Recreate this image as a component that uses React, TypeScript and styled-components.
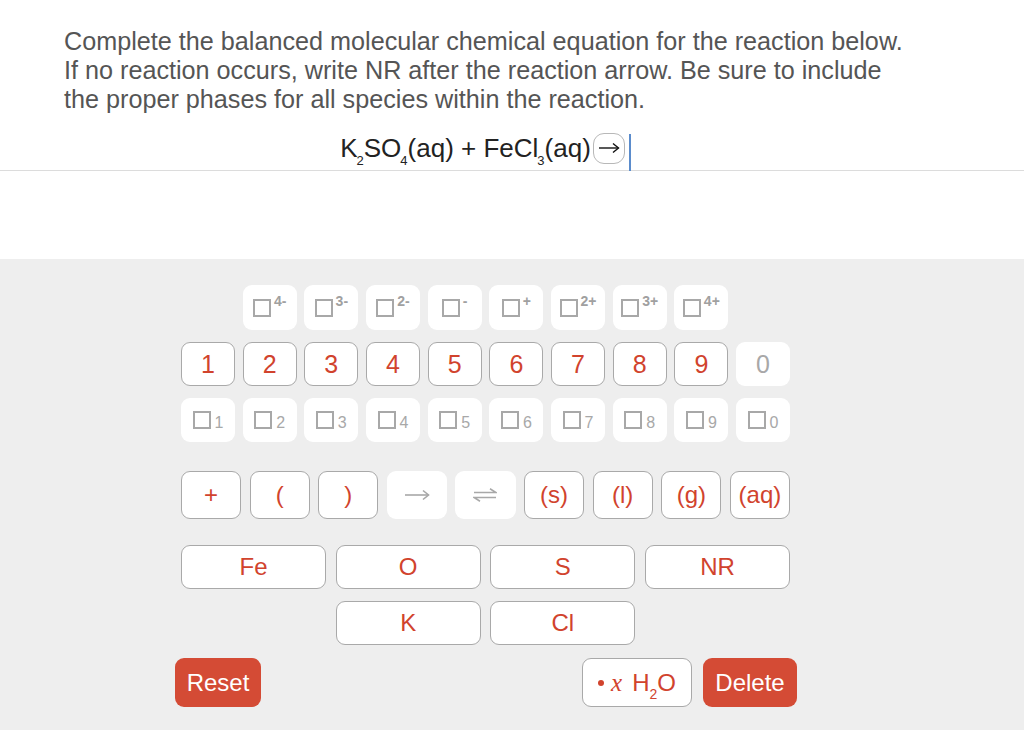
import React from "react";
import styled, { createGlobalStyle, css } from "styled-components";

const GlobalStyle = createGlobalStyle`
  html, body {
    margin: 0;
    padding: 0;
    background: #ffffff;
    font-family: "Liberation Sans", Arial, Helvetica, sans-serif;
  }
`;

const red = "#d1432d";

type Kind = "active" | "muted";

const Page = styled.div`
  width: 1024px;
  min-height: 730px;
  display: flex;
  flex-direction: column;
`;

const Top = styled.div`
  height: 259px;
  background: #fff;
`;

const Inner = styled.div`
  width: 971px;
`;

const Prompt = styled.p`
  margin: 0;
  padding: 27px 0 0 64px;
  font-size: 25.2px;
  line-height: 29px;
  color: #555;
  white-space: nowrap;
`;

const EquationBar = styled.div`
  margin-top: 16px;
  height: 40px;
  border-bottom: 1px solid #dcdcdc;
`;

const Equation = styled.div`
  width: 971px;
  height: 36px;
  display: flex;
  align-items: center;
  justify-content: center;
  font-size: 26px;
  color: #222;
`;

const Sub = styled.sub`
  font-size: 13px;
  vertical-align: -8px;
  line-height: 0;
  margin-left: -1px;
`;

const ArrowBox = styled.span`
  display: inline-flex;
  align-items: center;
  justify-content: center;
  width: 32px;
  height: 31px;
  margin-left: 2px;
  border: 1px solid #b8b8b8;
  border-radius: 11px;
  color: #111;
  box-sizing: border-box;
`;

const Caret = styled.span`
  display: inline-block;
  width: 2px;
  height: 37px;
  margin: 4px 0 0 4px;
  align-self: flex-start;
  background: #5b8ccc;
`;

const Pad = styled.div`
  flex: 1;
  background: #eeeeee;
  padding: 26px 0 0 181px;
`;

const Keys = styled.div`
  width: 609px;
  display: flex;
  flex-direction: column;
`;

const Grid = styled.div<{ $cols: number; $gap: number; $height: number; $mt: number }>`
  display: grid;
  grid-template-columns: repeat(${(p) => p.$cols}, 1fr);
  column-gap: ${(p) => p.$gap}px;
  height: ${(p) => p.$height}px;
  margin-top: ${(p) => p.$mt}px;
`;

const Key = styled.button<{ $kind?: Kind; $col?: number; $size?: number }>`
  margin: 0;
  padding: 0;
  box-sizing: border-box;
  display: flex;
  align-items: center;
  justify-content: center;
  background: #fff;
  border-radius: 9px;
  font-family: "Liberation Sans", Arial, sans-serif;
  font-size: ${(p) => p.$size ?? 24}px;
  cursor: pointer;
  ${(p) => p.$col && css`grid-column: ${p.$col};`}
  ${(p) =>
    p.$kind === "muted"
      ? css`
          border: 1px solid transparent;
          color: #a8a8a8;
        `
      : css`
          border: 1px solid #a9a9a9;
          color: ${red};
        `}
`;

const Square = styled.span`
  display: inline-block;
  width: 14px;
  height: 14px;
  border: 2px solid #a8a8a8;
`;

const Sup = styled.span`
  font-size: 14px;
  color: #a0a0a0;
  margin-left: 3px;
  align-self: flex-start;
  margin-top: 7px;
  font-weight: bold;
`;

const SubNum = styled.span`
  font-size: 16px;
  color: #a8a8a8;
  margin-left: 4px;
  align-self: flex-end;
  margin-bottom: 9px;
`;

const BoxGlyph = styled.span`
  display: flex;
  align-items: center;
`;

const BottomRow = styled.div`
  display: flex;
  align-items: center;
  margin: 13px 0 0 -6px;
  width: 622px;
  height: 49px;
`;

const Solid = styled.button<{ $w: number }>`
  width: ${(p) => p.$w}px;
  height: 49px;
  box-sizing: border-box;
  border: none;
  border-radius: 9px;
  background: #d44b35;
  color: #fff;
  font-family: "Liberation Sans", Arial, sans-serif;
  font-size: 24px;
  padding: 0;
  cursor: pointer;
`;

const Spacer = styled.div`
  flex: 1;
`;

const Hydrate = styled.button`
  width: 110px;
  height: 49px;
  margin-right: 11px;
  box-sizing: border-box;
  border: 1px solid #a9a9a9;
  border-radius: 9px;
  background: #fff;
  color: ${red};
  font-family: "Liberation Sans", Arial, sans-serif;
  font-size: 24px;
  padding: 0;
  display: flex;
  align-items: center;
  justify-content: center;
  gap: 7px;
`;

const Dot = styled.span`
  display: inline-block;
  width: 6px;
  height: 6px;
  border-radius: 50%;
  background: ${red};
`;

const VarX = styled.span`
  font-family: "Liberation Serif", "Times New Roman", serif;
  font-style: italic;
  font-size: 25px;
  margin-right: 3px;
`;

const HSub = styled.sub`
  font-size: 14px;
  vertical-align: -8px;
  line-height: 0;
`;

const RightArrow = ({ w, color, sw }: { w: number; color: string; sw: number }) => (
  <svg width={w} height="12" viewBox={`0 0 ${w} 12`} fill="none">
    <path d={`M1 6H${w - 1.5}`} stroke={color} strokeWidth={sw} />
    <path d={`M${w - 7} 1.5L${w - 1.5} 6L${w - 7} 10.5`} stroke={color} strokeWidth={sw} />
  </svg>
);

const Equilibrium = () => (
  <svg width="24" height="14" viewBox="0 0 24 14" fill="none" stroke="#a8a8a8" strokeWidth="1.6">
    <path d="M1 4.5H23L17 0.8" />
    <path d="M23 9.5H1L7 13.2" />
  </svg>
);

const charges = ["4-", "3-", "2-", "-", "+", "2+", "3+", "4+"];
const digits = ["1", "2", "3", "4", "5", "6", "7", "8", "9"];
const subs = ["1", "2", "3", "4", "5", "6", "7", "8", "9", "0"];
const phases = ["(s)", "(l)", "(g)", "(aq)"];

export default function App() {
  return (
    <Page>
      <GlobalStyle />
      <Top>
        <Inner>
          <Prompt>
            Complete the balanced molecular chemical equation for the reaction below.
            <br />
            If no reaction occurs, write NR after the reaction arrow. Be sure to include
            <br />
            the proper phases for all species within the reaction.
          </Prompt>
        </Inner>
        <EquationBar>
          <Equation>
            <span>
              K<Sub>2</Sub>SO<Sub>4</Sub>(aq) + FeCl<Sub>3</Sub>(aq)
            </span>
            <ArrowBox>
              <RightArrow w={22} color="#111" sw={1.4} />
            </ArrowBox>
            <Caret />
          </Equation>
        </EquationBar>
      </Top>
      <Pad>
        <Keys>
          <Grid $cols={10} $gap={7.7} $height={45} $mt={0}>
            {charges.map((c, i) => (
              <Key key={c} $kind="muted" $col={i + 2}>
                <BoxGlyph>
                  <Square />
                </BoxGlyph>
                <Sup>{c}</Sup>
              </Key>
            ))}
          </Grid>
          <Grid $cols={10} $gap={7.7} $height={44} $mt={12}>
            {digits.map((d) => (
              <Key key={d} $size={25}>{d}</Key>
            ))}
            <Key $kind="muted" $size={25}>0</Key>
          </Grid>
          <Grid $cols={10} $gap={7.7} $height={44} $mt={12}>
            {subs.map((s) => (
              <Key key={s} $kind="muted">
                <BoxGlyph>
                  <Square />
                </BoxGlyph>
                <SubNum>{s}</SubNum>
              </Key>
            ))}
          </Grid>
          <Grid $cols={9} $gap={8.5} $height={48} $mt={29}>
            <Key>+</Key>
            <Key>(</Key>
            <Key>)</Key>
            <Key $kind="muted" aria-label="yields">
              <RightArrow w={26} color="#a8a8a8" sw={1.6} />
            </Key>
            <Key $kind="muted" aria-label="equilibrium">
              <Equilibrium />
            </Key>
            {phases.map((p) => (
              <Key key={p}>{p}</Key>
            ))}
          </Grid>
          <Grid $cols={4} $gap={9.7} $height={44} $mt={26}>
            <Key>Fe</Key>
            <Key>O</Key>
            <Key>S</Key>
            <Key>NR</Key>
          </Grid>
          <Grid $cols={4} $gap={9.7} $height={44} $mt={12}>
            <Key $col={2}>K</Key>
            <Key $col={3}>Cl</Key>
          </Grid>
          <BottomRow>
            <Solid $w={86}>Reset</Solid>
            <Spacer />
            <Hydrate>
              <Dot />
              <VarX>x</VarX>
              <span>
                H<HSub>2</HSub>O
              </span>
            </Hydrate>
            <Solid $w={94}>Delete</Solid>
          </BottomRow>
        </Keys>
      </Pad>
    </Page>
  );
}
